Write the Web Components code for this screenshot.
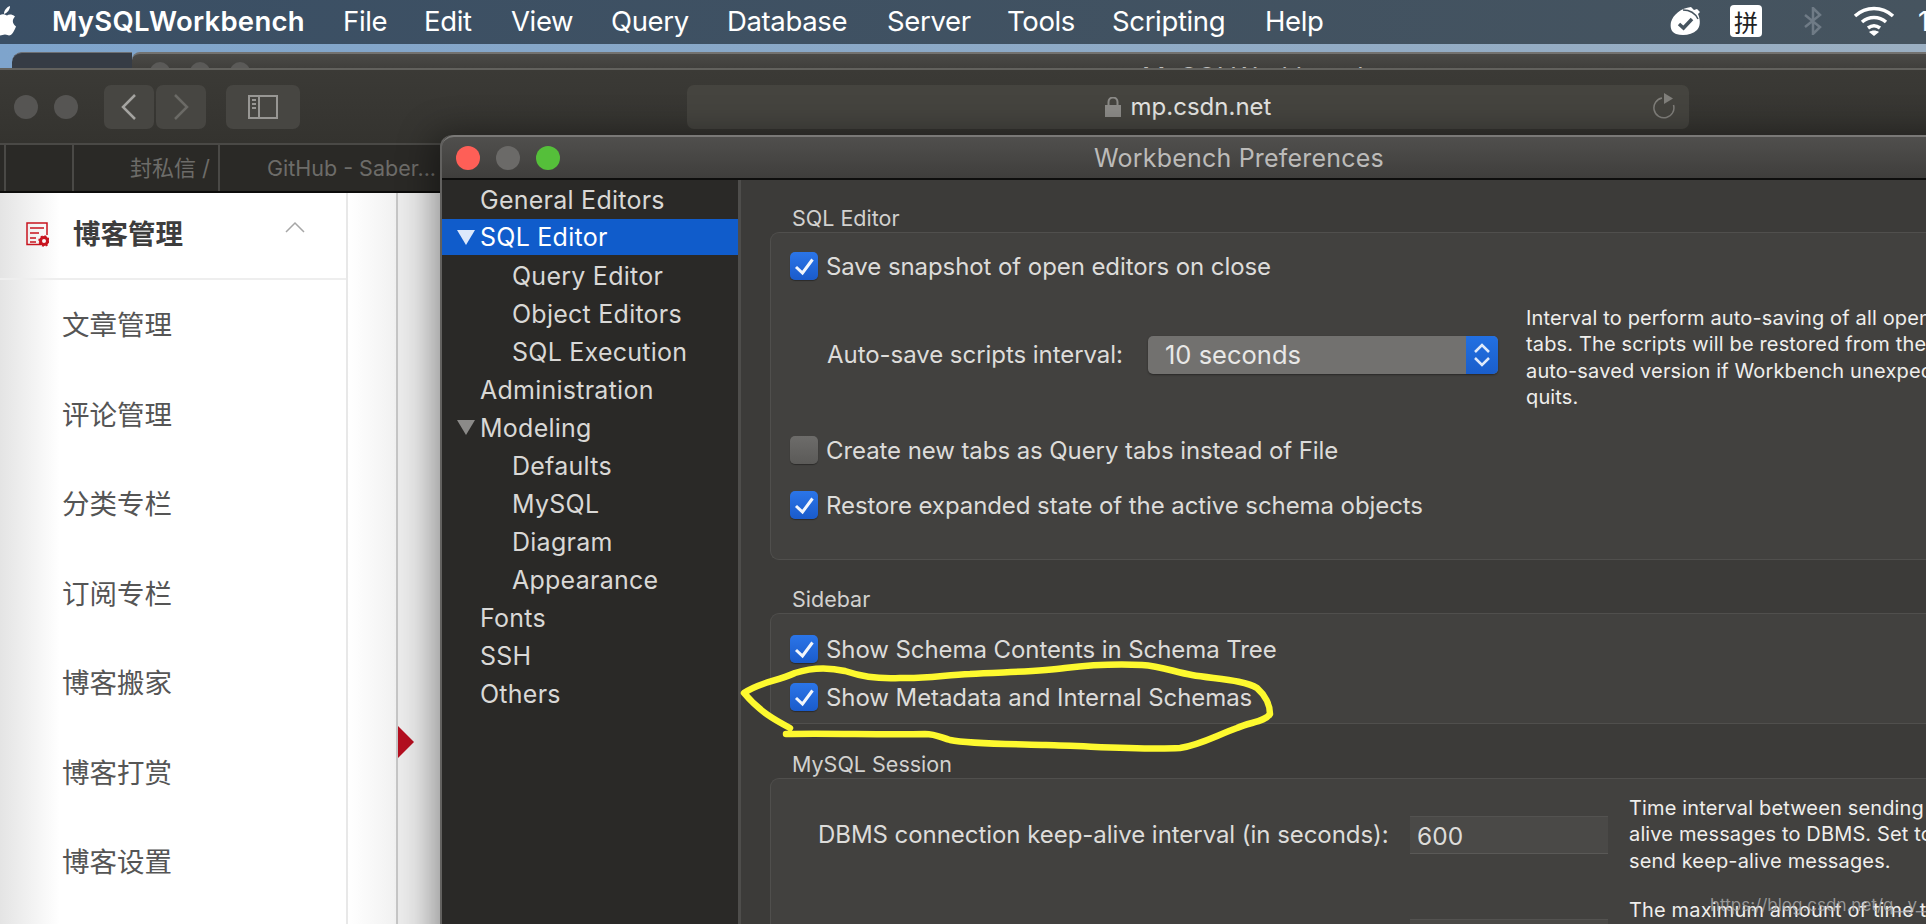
<!DOCTYPE html>
<html lang="en">
<head>
<meta charset="utf-8">
<title>Workbench Preferences</title>
<style>
  html, body { margin: 0; padding: 0; width: 1926px; height: 924px; overflow: hidden; background: #2b2a27; }
  body { position: relative; font-family: Inter, "Noto Sans CJK SC", sans-serif; -webkit-font-smoothing: antialiased; }
</style>
</head>
<body>
<mac-menubar></mac-menubar>
<back-windows></back-windows>
<browser-window>
  <blog-aside></blog-aside>
</browser-window>

<prefs-window>
  <pref-tree slot="tree">
    <pref-item>General Editors</pref-item>
    <pref-item arrow selected>SQL Editor</pref-item>
    <pref-item level="1">Query Editor</pref-item>
    <pref-item level="1">Object Editors</pref-item>
    <pref-item level="1">SQL Execution</pref-item>
    <pref-item>Administration</pref-item>
    <pref-item arrow>Modeling</pref-item>
    <pref-item level="1">Defaults</pref-item>
    <pref-item level="1">MySQL</pref-item>
    <pref-item level="1">Diagram</pref-item>
    <pref-item level="1">Appearance</pref-item>
    <pref-item>Fonts</pref-item>
    <pref-item>SSH</pref-item>
    <pref-item>Others</pref-item>
  </pref-tree>

  <pref-group label="SQL Editor" style="--box-h:328px;--pad:14px">
    <pref-check checked>Save snapshot of open editors on close</pref-check>
    <pref-row style="margin-top:20px;--label-w:321px;--field-w:350px;--note-gap:28px;--pad-l:56px;--rh:105px;--shift:-6px">
      <span slot="label">Auto-save scripts interval:</span>
      <pref-select slot="field">10 seconds</pref-select>
      <span slot="note">Interval to perform auto-saving of all open editor<br>tabs. The scripts will be restored from the last<br>auto-saved version if Workbench unexpectedly<br>quits.</span>
    </pref-row>
    <pref-check style="margin-top:21px">Create new tabs as Query tabs instead of File</pref-check>
    <pref-check checked style="margin-top:17px">Restore expanded state of the active schema objects</pref-check>
  </pref-group>

  <pref-group label="Sidebar" style="--box-h:111px;--pad:16px;margin-top:24px">
    <pref-check checked>Show Schema Contents in Schema Tree</pref-check>
    <pref-check checked style="margin-top:10px">Show Metadata and Internal Schemas</pref-check>
  </pref-group>

  <pref-group label="MySQL Session" style="--box-h:220px;--pad:16px;margin-top:25px">
    <pref-row style="--label-w:592px;--field-w:198px;--note-gap:21px;--pad-l:47px;--rh:79px">
      <span slot="label">DBMS connection keep-alive interval (in seconds):</span>
      <pref-input slot="field">600</pref-input>
      <span slot="note">Time interval between sending keep-<br>alive messages to DBMS. Set to 0 to not<br>send keep-alive messages.</span>
    </pref-row>
    <pref-row style="margin-top:23px;--label-w:592px;--field-w:198px;--note-gap:21px;--pad-l:47px;--rh:79px;--align:start;--shift:22px">
      <span slot="label"></span>
      <pref-input slot="field"></pref-input>
      <span slot="note">The maximum amount of time the</span>
    </pref-row>
  </pref-group>
</prefs-window>

<ink-annotation></ink-annotation>
<csdn-mark>https://blog.csdn.net/q__y__L</csdn-mark>

<script>
function register(name, html, setup) {
  const template = document.createElement('template');
  template.innerHTML = html;
  customElements.define(name, class extends HTMLElement {
    constructor() {
      super();
      this.attachShadow({mode: 'open'}).appendChild(template.content.cloneNode(true));
    }
    connectedCallback() {
      if (setup) setup(this, this.shadowRoot);
    }
  });
}

register('mac-menubar', `
  <style>
    :host { display: flex; align-items: center; height: 44px; overflow: hidden; color: #fff;
      background: linear-gradient(90deg, #3a4f65, #46545f); font-size: 27.5px; box-sizing: border-box; padding-bottom: 2px; }
    .apple { width: 17px; height: 32px; flex: none; }
    .name { font-weight: 600; margin-left: 35px; width: 291px; flex: none; letter-spacing: .25px; }
    nav { display: flex; width: 1288px; flex: none; }
    nav span { letter-spacing: -.35px; }
    .tray { display: flex; align-items: center; flex: none; }
    .py { width: 32px; height: 32px; background: #fff; color: #222; border-radius: 4px; font: 24px "Noto Sans CJK SC", sans-serif;
      display: flex; align-items: center; justify-content: center; flex: none; }
    .clock { margin-left: 23px; font-size: 27px; }
  </style>
  <svg class="apple" viewBox="0 0 17 32"><path fill="#fff" d="M0 10c2-1 4-1 7 .5 2-1.500 5-1.500 8 1-3 3-3 7 1 10-1.500 4-4 9-7 9-1 0-2-1-4-1-2 0-3 1-5 1v-20.500zM4 9c0-4 3-7 6-8 0 4-3 7-6 8z"/></svg>
  <span class="name">MySQLWorkbench</span>
  <nav>
    <span style="width:81px">File</span><span style="width:87px">Edit</span><span style="width:100px">View</span>
    <span style="width:116px">Query</span><span style="width:160px">Database</span><span style="width:120px">Server</span>
    <span style="width:105px">Tools</span><span style="width:153px">Scripting</span><span style="width:80px">Help</span>
  </nav>
  <div class="tray">
    <svg width="32" height="30" viewBox="0 0 32 30" style="margin-left:39px;margin-right:28px;flex:none">
      <path fill="#fff" d="M21 1l3 3 3-1 3 3-2 2c3 7 2 13-1 16-5 5-14 6-21 4C1 26 0 21 1 16 3 9 11 2 21 1z"/>
      <path fill="none" stroke="#46545f" stroke-width="3.500" d="M9 18l4.500 4L22 13"/>
      <path fill="none" stroke="#46545f" stroke-width="1.500" d="M13 4c6 0 12 3 15 9"/>
    </svg>
    <span class="py">拼</span>
    <svg width="18" height="28" viewBox="0 0 18 28" style="margin-left:42px;flex:none"><path fill="none" stroke="#6f7b86" stroke-width="2.500" d="M1 8l15 12-7 7V1l7 7L1 20"/></svg>
    <svg width="42" height="30" viewBox="0 0 42 30" style="margin-left:31px;flex:none">
      <g fill="none" stroke="#fff" stroke-width="3.500"><path d="M2 10c11-10 27-10 38 0"/><path d="M9 16c7-6 17-6 24 0"/><path d="M15 22c4-3 8-3 12 0"/></g>
      <path fill="#fff" d="M21 30l-5-4c3-2 7-2 10 0z"/>
    </svg>
    <span class="clock">1</span>
  </div>
`);

register('back-windows', `
  <style>
    :host { display: flex; height: 24px; padding: 8px 0 0 12px; box-sizing: border-box; overflow: hidden;
      background: linear-gradient(90deg, #7ea4cc, #9bafc2); }
    .w1 { width: 120px; background: #363c45; border-radius: 10px 0 0 0; border-top: 1px solid #6d6f73; }
    .w2 { flex: 1; background: linear-gradient(#4b4a47, #403f3c); border-radius: 8px 0 0 0; border-top: 2px solid #737270;
      position: relative; display: flex; gap: 20px; padding: 8px 0 0 18px; }
    i { width: 20px; height: 20px; border-radius: 50%; background: #5b5a58; flex: none; }
    span { position: absolute; left: 1010px; top: 10px; font-size: 26px; line-height: 26px; color: #bdbcba; white-space: nowrap; }
  </style>
  <div class="w1"></div>
  <div class="w2"><i></i><i></i><i></i><span>MySQLWorkbench</span></div>
`);

register('browser-window', `
  <style>
    :host { display: block; height: 856px; }
    .bar { display: flex; align-items: center; height: 75px; box-sizing: border-box; padding-left: 14px;
      background: linear-gradient(#3b3a36, #34332f); border-top: 2px solid #62615d; }
    .dot { width: 24px; height: 24px; border-radius: 50%; background: #565553; margin-right: 16px; flex: none; }
    .btn { height: 44px; width: 50px; border-radius: 7px; background: #474642; display: flex; align-items: center; justify-content: center; flex: none; }
    .url { position: relative; width: 1002px; height: 44px; margin-left: 387px; border-radius: 7px; background: #45443f; color: #e4e4e2;
      display: flex; align-items: center; justify-content: center; gap: 10px; font-size: 24px; flex: none; }
    .reload { position: absolute; right: 13px; top: 8px; }
    .tabs { display: flex; height: 50px; background: #2a2926; border-top: 2px solid #4a4946; border-bottom: 2px solid #0c0c0b;
      box-sizing: border-box; color: #6d6c69; font-size: 21.500px; white-space: nowrap; overflow: hidden; }
    .tabs div { border-right: 2px solid #4a4946; box-sizing: border-box; display: flex; align-items: center; justify-content: flex-end; padding-right: 8px; flex: none; }
    .page { display: flex; height: 731px; background: #fff; }
    .main { position: relative; flex: 1; display: flex; }
    .a { width: 48px; background: linear-gradient(90deg, #fff, #f1f1f1); border-right: 2px solid #c6c6c6; }
    .b { flex: 1; background: #ececec; }
    .flag { position: absolute; left: 50px; top: 533px; width: 0; height: 0; border-left: 16px solid #b50f20; border-top: 16px solid transparent; border-bottom: 16px solid transparent; }
  </style>
  <div class="bar">
    <span class="dot"></span><span class="dot" style="margin-right:26px"></span>
    <span class="btn"><svg width="16" height="26" viewBox="0 0 16 26"><path fill="none" stroke="#a5a4a1" stroke-width="2.500" d="M14 1L2 13l12 12"/></svg></span>
    <span class="btn" style="margin-left:2px"><svg width="16" height="26" viewBox="0 0 16 26"><path fill="none" stroke="#6b6a66" stroke-width="2.500" d="M2 1l12 12L2 25"/></svg></span>
    <span class="btn" style="margin-left:20px;width:74px"><svg width="30" height="24" viewBox="0 0 30 24"><path fill="none" stroke="#989794" stroke-width="2" d="M1 1h28v22H1zM11 1v22"/><path stroke="#989794" stroke-width="2" d="M4 5h4M4 9h4M4 13h4"/></svg></span>
    <div class="url">
      <svg width="16" height="20" viewBox="0 0 16 20"><path fill="#8c8b88" d="M0 8h16v12H0z"/><path fill="none" stroke="#8c8b88" stroke-width="2" d="M3.500 8V5a4.500 4.500 0 0 1 9 0v3"/></svg>
      <span>mp.csdn.net</span>
      <svg class="reload" width="24" height="26" viewBox="0 0 24 26"><path fill="none" stroke="#807f7b" stroke-width="1.500" d="M10 5a10 10 0 1 0 11.500 7"/><path fill="#807f7b" d="M12 0l9 5.500-9 5.500z"/></svg>
    </div>
  </div>
  <div class="tabs">
    <div style="width:6px;padding:0"></div>
    <div style="width:68px;padding:0"></div>
    <div style="width:146px;font-size:22px;padding-bottom:4px">封私信 /</div>
    <div style="padding:0 0 0 47px;border:0">GitHub - Saber...</div>
  </div>
  <div class="page">
    <slot></slot>
    <div class="main"><div class="a"></div><div class="b"></div><span class="flag"></span></div>
  </div>
`);

register('blog-aside', `
  <style>
    :host { display: block; width: 348px; box-sizing: border-box; flex: none; border-right: 2px solid #e8e8e8;
      background: linear-gradient(90deg, #e4e4e4, #fff 60px); font-family: "Noto Sans CJK SC", sans-serif; }
    header { display: flex; align-items: center; height: 87px; border-bottom: 2px solid #eee; box-sizing: border-box; padding-left: 26px;
      font-size: 27.500px; font-weight: 700; color: #3d3d3d; }
    header span { margin: -7px 0 0 24px; width: 212px; }
    div { height: 89.500px; line-height: 86px; padding-left: 62px; font-size: 27.500px; color: #555; }
  </style>
  <header>
    <svg width="23" height="25" viewBox="0 0 23 25" style="flex:none;margin-top:-2px"><g fill="none" stroke="#c8141f" stroke-width="1.500"><path d="M15 22.500H1V1h20v12"/><path d="M4 6h14M4 11h9M4 16h6M4 20h6"/></g><circle cx="18" cy="19" r="3.500" fill="none" stroke="#c8141f" stroke-width="3"/><circle cx="18" cy="19" r="5" fill="none" stroke="#c8141f" stroke-width="1.500" stroke-dasharray="2 1.900"/></svg>
    <span>博客管理</span>
    <svg width="20" height="12" viewBox="0 0 20 12" style="margin-top:-18px"><path fill="none" stroke="#a6a6a6" stroke-width="1.500" d="M1 11l9-9 9 9"/></svg>
  </header>
  <div>文章管理</div><div>评论管理</div><div>分类专栏</div><div>订阅专栏</div><div>博客搬家</div><div>博客打赏</div><div>博客设置</div>
`);

register('prefs-window', `
  <style>
    :host { display: block; position: absolute; left: 440px; top: 135px; width: 1600px; height: 900px; color: #dddcda;
      box-sizing: border-box; border-left: 2px solid #62615f; border-radius: 12px 0 0 0; background: #3c3b39; box-shadow: -6px 0 36px rgba(0,0,0,.42); }
    .title { display: flex; align-items: center; height: 45px; box-sizing: border-box; padding-left: 14px; gap: 16px; position: relative;
      border-radius: 12px 0 0 0; border-top: 2px solid #7a7977; border-bottom: 2px solid #0e0e0d; background: linear-gradient(#504f4d, #3f3e3c); }
    .title i { width: 24px; height: 24px; border-radius: 50%; flex: none; }
    .title span { position: absolute; left: 652px; top: 6px; font-size: 25px; letter-spacing: .2px; color: #bcbbb9; white-space: nowrap; }
    .body { display: flex; height: 853px; }
    .panel { flex: 1; padding: 23px 0 0 29px; min-width: 0; }
  </style>
  <div class="title">
    <i style="background:#fe5f57"></i><i style="background:#6b6a68"></i><i style="background:#55bf3a"></i>
    <span>Workbench Preferences</span>
  </div>
  <div class="body">
    <slot name="tree"></slot>
    <div class="panel"><slot></slot></div>
  </div>
`);

register('pref-tree', `
  <style>
    :host { display: block; width: 299px; flex: none; box-sizing: border-box; padding-top: 1px; background: #2a2927; border-right: 3px solid #4e4d4b; }
  </style>
  <slot></slot>
`);

register('pref-item', `
  <style>
    :host { display: flex; align-items: center; height: 38px; line-height: 38px; box-sizing: border-box; padding-left: 38px; font-size: 25px; color: #d9d8d6; position: relative; letter-spacing: .25px; }
    :host([level="1"]) { padding-left: 70px; }
    :host([selected]) { color: #fff; background: #105ccb; background-clip: padding-box; border-bottom: 2px solid transparent; }
    .tri { position: absolute; left: 15px; top: 11px; display: none; width: 0; height: 0; border-left: 9px solid transparent; border-right: 9px solid transparent; border-top: 15px solid #8b8a88; }
    :host([arrow]) .tri { display: block; }
    :host([selected]) .tri { border-top-color: #dce8fb; }
  </style>
  <span class="tri"></span><slot></slot>
`);

register('pref-group', `
  <style>
    :host { display: block; }
    .label { height: 28px; line-height: 30px; margin-bottom: 1px; padding-left: 22px; font-size: 21.500px; color: #d2d1cf; }
    .box { height: var(--box-h); box-sizing: border-box; padding-top: var(--pad); background: #42413f; border: 1px solid #504f4d; border-radius: 9px 0 0 9px; border-right: 0; }
  </style>
  <div class="label"></div>
  <div class="box"><slot></slot></div>
`, (el, root) => {
  root.querySelector('.label').textContent = el.getAttribute('label');
});

register('pref-check', `
  <style>
    :host { display: flex; align-items: center; height: 38px; padding-left: 19px; gap: 8px; font-size: 24px; white-space: nowrap; color: #dddcda; letter-spacing: -.08px; }
    .cb { width: 28px; height: 28px; box-sizing: border-box; border-radius: 5px; flex: none; background: linear-gradient(#6d6c6a, #5b5a58); box-shadow: 0 1px 1px rgba(0,0,0,.35); }
    :host([checked]) .cb { background: linear-gradient(#2b75e8, #1a5bcb); }
    svg { display: none; }
    :host([checked]) svg { display: block; }
  </style>
  <span class="cb"><svg width="28" height="28" viewBox="0 0 28 28"><path fill="none" stroke="#f2f6fc" stroke-width="3" d="M6 15l6.500 6L22.500 7.500"/></svg></span>
  <slot></slot>
`);

register('pref-row', `
  <style>
    :host { display: grid; grid-template-columns: var(--label-w) var(--field-w) auto; column-gap: 0; height: var(--rh); padding-left: var(--pad-l); align-items: var(--align, center); font-size: 24px; white-space: nowrap; letter-spacing: -.05px; }
    .label, .field { margin-top: var(--shift, 0); }
    .note { margin-left: var(--note-gap); font-size: 20px; line-height: 26.300px; color: #efeeec; letter-spacing: .15px; }
  </style>
  <div class="label"><slot name="label"></slot></div>
  <div class="field"><slot name="field"></slot></div>
  <div class="note"><slot name="note"></slot></div>
`);

register('pref-select', `
  <style>
    :host { display: flex; height: 38px; border-radius: 5px; overflow: hidden; background: #72716f; color: #e8e8e7; font-size: 25.500px; line-height: 38px; box-shadow: 0 1px 2px rgba(0,0,0,.4); letter-spacing: 0; }
    .v { flex: 1; padding-left: 17px; }
    .s { width: 32px; background: linear-gradient(#2270e2, #1a5ecb); display: flex; align-items: center; justify-content: center; }
  </style>
  <span class="v"><slot></slot></span>
  <span class="s"><svg width="18" height="30" viewBox="0 0 18 30"><path fill="none" stroke="#dfe9fa" stroke-width="2.500" d="M2 12l7-7 7 7M2 18l7 7 7-7"/></svg></span>
`);

register('pref-input', `
  <style>
    :host { display: block; height: 38px; line-height: 38px; box-sizing: border-box; padding-left: 7px; background: #4a4947; border-top: 1px solid #535250; border-bottom: 1px solid #5a5957; font-size: 24.500px; color: #dddcda; letter-spacing: 0; }
  </style>
  <slot></slot>
`);

register('ink-annotation', `
  <style>
    :host { display: block; position: absolute; left: 0; top: 0; pointer-events: none; }
    svg { display: block; }
  </style>
  <svg width="1926" height="924" viewBox="0 0 1926 924">
    <path fill="none" stroke="#fdf92f" stroke-width="6.500" stroke-linecap="round" stroke-linejoin="round"
      d="M790 728C775 720 760 712 744 693C760 682 775 682 795 673C810 668 828 667 845 671C860 676 874 679 900 678C925 679 945 675 970 674C1000 672 1040 672 1065 668C1090 665 1120 664 1142 665C1160 666 1175 672 1192 675C1215 679 1245 680 1257 688C1265 695 1270 705 1270 714C1265 722 1250 722 1237 728C1215 736 1200 745 1180 748C1140 750 1090 746 1046 745C1010 744 970 744 950 740C940 737 935 734 925 734C880 735 830 733 786 734"/>
  </svg>
`);

register('csdn-mark', `
  <style>
    :host { display: block; position: absolute; left: 1710px; top: 895px; font-size: 17px; line-height: 20px; color: rgba(175,175,175,.78); white-space: nowrap; }
  </style>
  <slot></slot>
`);
</script>
</body>
</html>
